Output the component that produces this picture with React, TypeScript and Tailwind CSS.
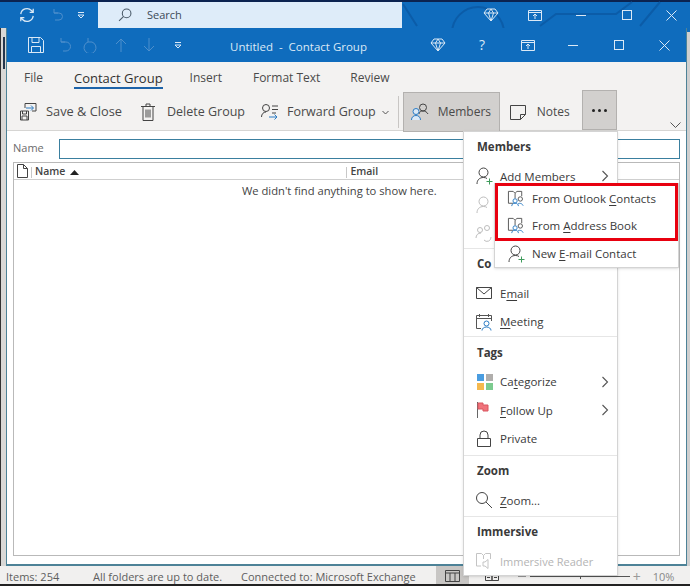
import type { ReactNode } from 'react';

function Stroke({ size = 20, children, className = '' }: { size?: number; children: ReactNode; className?: string }) {
  return (
    <svg width={size} height={size} viewBox="0 0 20 20" fill="none" stroke="currentColor" strokeWidth="1" className={className}>
      {children}
    </svg>
  );
}

function Person({ plus, color = '#444' }: { plus?: boolean; color?: string }) {
  return (
    <Stroke>
      <circle cx="9.500" cy="6.500" r="4.500" stroke={color} />
      <path d="M3 18c0-4 2.500-6.500 6.500-6.500 1.500 0 2.500.3 3.500 1" stroke={color} />
      {plus && <path d="M15.500 12.500v6M12.500 15.500h6" stroke="#3f9b5c" />}
    </Stroke>
  );
}

function BookPeople() {
  return (
    <Stroke size={19}>
      <path d="M1.500 15V2.500h5l2 2 2-2h5v5M1.500 15h5M8.500 4.500V10" stroke="#555" />
      <circle cx="14" cy="10.500" r="2.300" stroke="#555" />
      <circle cx="8.500" cy="12.500" r="2.200" stroke="#2b7cc4" />
      <path d="M5 18c0-2 1.500-3 3.500-3s3.500 1 3.500 3M11.500 15.500c1-.6 4-1 5.500 2" stroke="#2b7cc4" />
    </Stroke>
  );
}

function Chevron() {
  return (
    <svg width="8" height="12" viewBox="0 0 8 12" fill="none" stroke="#555" strokeWidth="1.100">
      <path d="M1.500 1l5 5-5 5" />
    </svg>
  );
}

function Diamond({ color = '#dbe9f6' }: { color?: string }) {
  return (
    <svg width="16" height="14" viewBox="0 0 16 14" fill="none" stroke={color} strokeWidth="1">
      <path d="M4 1h8l3 4-7 8-7-8zM1 5h14M5.500 5L8 13l2.500-8L8 1 5.500 5z" />
    </svg>
  );
}

function WindowControls({ help }: { help?: boolean }) {
  return (
    <div className="flex items-center text-[#dbe9f6]">
      <Diamond />
      {help && <span className="w-[72px] text-center text-[14px] leading-none">?</span>}
      <svg width="14" height="11" viewBox="0 0 14 11" fill="none" stroke="currentColor" className={help ? 'ml-[3px]' : 'ml-[29px]'}>
        <path d="M.5.500h13v10H.5zM.5 2.500h13M7 9V4.500M5 6l2-2 2 2" />
      </svg>
      <div className="ml-[33.5px] h-px w-[10px] bg-current" />
      <div className="ml-[36px] h-[10px] w-[10px] border border-current" />
      <svg width="11" height="11" viewBox="0 0 11 11" stroke="currentColor" className="ml-[34.5px]">
        <path d="M.500.500l10 10M10.500.500l-10 10" />
      </svg>
    </div>
  );
}

function U({ children }: { children: string }) {
  return <span className="underline underline-offset-2">{children}</span>;
}

function MenuRow({ icon, children, arrow, dim, className = '' }: { icon: ReactNode; children?: ReactNode; arrow?: boolean; dim?: boolean; className?: string }) {
  return (
    <div className={`flex h-[28.5px] items-center pl-[10px] pr-[8px] ${dim ? 'text-[#b4b4b4]' : 'text-[#3a3a3a]'} ${className}`}>
      <div className="flex w-[26px] shrink-0 items-center">{icon}</div>
      <div className="flex-1 whitespace-nowrap">{children}</div>
      {arrow && <Chevron />}
    </div>
  );
}

function MenuHeading({ children }: { children: string }) {
  return <div className="flex h-[31.5px] items-center border-t border-[#e6e6e6] pl-[13px] font-bold text-[#3a3a3a]">{children}</div>;
}

function RibbonButton({ icon, label, className = '' }: { icon: ReactNode; label: string; className?: string }) {
  return (
    <div className={`flex items-center gap-[7px] whitespace-nowrap ${className}`}>
      {icon}
      <span>{label}</span>
    </div>
  );
}

export default function App() {
  return (
    <div className="relative flex h-[586px] w-[690px] flex-col overflow-hidden bg-[#f1f0ef] font-['Open_Sans','Noto_Sans',sans-serif]">
      {/* Window behind */}
      <div className="flex h-[28px] shrink-0 items-center border-t-2 border-[#0b2350] bg-[#0f6cbd] text-[#dbe9f6]">
        <div className="flex w-[98px] items-center pl-[19px]">
          <svg width="16" height="16" viewBox="0 0 18 18" fill="none" stroke="currentColor" strokeWidth="1.400">
            <path d="M2 8a7 7 0 0 1 12-4l2 2M16 10a7 7 0 0 1-12 4l-2-2M16 2v4h-4M2 16v-4h4" />
          </svg>
          <svg width="14" height="14" viewBox="0 0 14 14" fill="none" stroke="#4e8fcc" className="ml-[14px]">
            <path d="M5 5h5a3 3 0 0 1 0 7H6M5 1v4h4" />
          </svg>
          <svg width="8" height="8" viewBox="0 0 8 8" fill="none" stroke="currentColor" className="ml-[14px]">
            <path d="M1 1.500h6M1 4l3 3 3-3z" />
          </svg>
        </div>
        <div className="flex h-full w-[304px] items-center bg-[#deecf9] pl-[20px] text-[11px] text-[#3c4a57]">
          <svg width="14" height="14" viewBox="0 0 13 13" fill="none" stroke="#4a5a68">
            <circle cx="8" cy="5" r="4" />
            <path d="M5 8l-4 4" />
          </svg>
          <span className="ml-[15px]">Search</span>
        </div>
        <div className="relative z-10 ml-[81px]">
          <WindowControls />
        </div>
      </div>

      <div className="flex min-h-0 flex-1">
        <div className="w-[6px] shrink-0 border-l border-[#333] bg-[#d9d8d6]">
          <div className="ml-[2px] mt-[9px] h-[32px] w-[2px] bg-[#24364d]" />
        </div>

        {/* Contact group window */}
        <div className="flex min-w-0 flex-1 flex-col border-x border-b-2 border-[#4d8297] bg-white">
          <div className="relative z-10 flex h-[34px] shrink-0 items-center bg-[#0f6cbd] text-[#dbe9f6]">
            <svg width="16" height="16" viewBox="0 0 16 16" fill="none" stroke="currentColor" className="ml-[21px]">
              <path d="M.5.500h12l3 3v12H.5zM4 .500v5h7v-5M3.500 15.500v-6h9v6" />
            </svg>
            <svg width="100" height="16" viewBox="0 0 100 16" fill="none" stroke="#4e8fcc" className="ml-[13px]">
              <path d="M4 5h5a4.500 4.500 0 0 1 0 9H6M4 1v4h4" />
              <path d="M31 5a6 6 0 1 0 4 0M31 1v4h4" />
              <path d="M64 15V2M59 7l5-5 5 5M92 1v13M87 9l5 5 5-5" />
            </svg>
            <svg width="8" height="8" viewBox="0 0 8 8" fill="none" stroke="currentColor" className="ml-[17px]">
              <path d="M1 1.500h6M1 4l3 3 3-3z" />
            </svg>
            <span className="ml-[48px] whitespace-pre pt-[3px] text-[11.5px]">Untitled  -  Contact Group</span>
            <div className="ml-[63px]">
              <WindowControls help />
            </div>
          </div>

          {/* Ribbon */}
          <div className="h-[69px] shrink-0 border-b border-[#d6d5d3] bg-[#f3f2f1] text-[12px] text-[#4a4a4a]">
            <div className="flex h-[31px] items-end pb-[6px] pl-[17px]">
              <span>File</span>
              <span className="relative ml-[31px] text-[13px] font-medium leading-[18px] text-[#323130]">
                Contact Group
                <span className="absolute inset-x-0 -bottom-[2px] h-[2px] bg-[#1d63a8]" />
              </span>
              <span className="ml-[27px]">Insert</span>
              <span className="ml-[31px]">Format Text</span>
              <span className="ml-[30px]">Review</span>
            </div>
            <div className="flex h-[38px] items-center pl-[12px]">
              <RibbonButton
                className="text-[12.8px]"
                label="Save & Close"
                icon={
                  <Stroke>
                    <path d="M1.500 9h8v9h-8zM3.500 9v3h4V9M3 18v-4h5v4" stroke="#444" />
                    <path d="M6 6V1.500h11V9h-4" stroke="#444" />
                    <path d="M7 6h7M12 3.500l2.500 2.500L12 8.500" stroke="#2b7cc4" />
                  </Stroke>
                }
              />
              <RibbonButton
                className="ml-[16px] text-[12.5px]"
                label="Delete Group"
                icon={
                  <Stroke className="mr-[2px]">
                    <path d="M3 4.500h14M5 4.500v14h10v-14M8 4.500V2h4v2.500M8 7.500v8M10 7.500v8M12 7.500v8" stroke="#444" />
                  </Stroke>
                }
              />
              <RibbonButton
                className="ml-[15px] text-[12.5px]"
                label="Forward Group"
                icon={
                  <Stroke>
                    <circle cx="6" cy="6" r="3.500" stroke="#444" />
                    <path d="M1.500 15c0-3 2-5 4.500-5M12 4h6M12 7.500h6M12 11h4" stroke="#444" />
                    <path d="M9 15h8M14.500 12.500L17 15l-2.500 2.500" stroke="#2b7cc4" />
                  </Stroke>
                }
              />
              <svg width="7" height="5" viewBox="0 0 7 5" fill="none" stroke="#555" className="ml-[6px]">
                <path d="M.5 1l3 3 3-3" />
              </svg>
              <div className="ml-[9px] h-[32px] w-px bg-[#c8c6c4]" />
              <div className="ml-[4px] flex h-[40px] w-[97px] shrink-0 items-center gap-[8px] border border-[#b3b1af] bg-[#d2d0ce] pl-[6px]">
                <Stroke>
                  <circle cx="13" cy="5.500" r="3.500" stroke="#444" />
                  <path d="M9 12c0-2 2-3 4-3s4 1 5 3" stroke="#444" />
                  <circle cx="6" cy="9.500" r="3" fill="#dbe9f6" stroke="#2b7cc4" />
                  <path d="M1.500 18c0-3 2-4.500 4.500-4.500s4.500 1.500 4.500 4.500" fill="#dbe9f6" stroke="#2b7cc4" />
                </Stroke>
                <span>Members</span>
              </div>
              <RibbonButton
                className="ml-[8px]"
                label="Notes"
                icon={
                  <Stroke className="mr-[2px]">
                    <path d="M2.500 3.500h15v9l-5 5h-10zM17.500 12.500h-5v5" stroke="#444" />
                  </Stroke>
                }
              />
              <div className="ml-[12px] flex h-[40px] w-[35px] shrink-0 -translate-y-[2px] items-center justify-center gap-[3px] border border-[#b3b1af] bg-[#d2d0ce]">
                <span className="h-[3px] w-[3px] rounded-full bg-[#222]" />
                <span className="h-[3px] w-[3px] rounded-full bg-[#222]" />
                <span className="h-[3px] w-[3px] rounded-full bg-[#222]" />
              </div>
              <svg width="11" height="6" viewBox="0 0 11 6" fill="none" stroke="#555" className="ml-[53px] mt-[26px]">
                <path d="M.5.500l5 5 5-5" />
              </svg>
            </div>
          </div>

          {/* Name field */}
          <div className="flex h-[31px] shrink-0 items-center pl-[6px] pr-[6px] pt-[4px] text-[11px] text-[#6b6b6b]">
            <span className="w-[46px]">Name</span>
            <div className="h-[20px] flex-1 border border-[#3a7f9f]" />
          </div>

          {/* List */}
          <div className="mx-[6px] mb-[8px] flex min-h-0 flex-1 flex-col border border-[#b9b9b9]">
            <div className="flex h-[17px] shrink-0 items-center border-b border-[#cfcfcf] pt-[2px] text-[10.5px] font-semibold text-[#444]">
              <svg width="11" height="14" viewBox="0 0 11 14" fill="none" stroke="#444" className="ml-[3px] -mt-[2px]">
                <path d="M.5.500h6l4 4v9H.5zM6.500.500v4h4" />
              </svg>
              <div className="ml-[3px] h-[11px] w-px bg-[#c8c8c8]" />
              <span className="ml-[3px]">Name</span>
              <svg width="9" height="5" viewBox="0 0 9 5" fill="#222" className="ml-[5px]">
                <path d="M4.500 0L9 5H0z" />
              </svg>
              <div className="ml-[267px] h-[11px] w-px bg-[#c8c8c8]" />
              <span className="ml-[3px]">Email</span>
            </div>
            <p className="mt-[3px] pl-[228px] text-[11.2px] font-medium text-[#444]">We didn't find anything to show here.</p>
          </div>
        </div>

        <div className="w-[3px] shrink-0 bg-[#cfcfcf]">
          <div className="h-[4px] bg-[#0f6cbd]" />
        </div>
      </div>

      {/* Status bar */}
      <div className="relative flex h-[20px] shrink-0 items-center border-b-2 border-[#222] pl-[6px] text-[11px] text-[#5e5e5e]">
        <span className="w-[87px] pt-[4px]">Items: 254</span>
        <span className="w-[148px] pt-[4px]">All folders are up to date.</span>
        <span className="pt-[4px]">Connected to: Microsoft Exchange</span>
        <div className="ml-[20px] flex h-full w-[33px] items-center justify-center bg-[#c8c6c4] pt-[2px]">
          <svg width="15" height="12" viewBox="0 0 15 12" fill="none" stroke="#444">
            <path d="M.5.500h14v11H.5zM.5 3h14M5 3v8.500M10 3v8.500" />
          </svg>
        </div>
        <svg width="14" height="9" viewBox="0 0 14 9" fill="none" stroke="#444" className="ml-[16px] mt-[3px]">
          <path d="M.5.500H7v8H.5zM7 .500h6.500v8H7zM2 3h3M2 5.500h3M9 3h3M9 5.500h3" />
        </svg>
        <div className="ml-[19px] mt-[3px] h-px w-[8px] bg-[#999]" />
        <div className="relative ml-[4px] mt-[3px] h-px w-[100px] bg-[#555]">
          <div className="absolute left-[50px] -top-[2px] h-[5px] w-px bg-[#555]" />
        </div>
        <span className="ml-[3px] pt-[3px] text-[14px] leading-none text-[#999]">+</span>
        <span className="ml-[12px] pt-[4px] text-[#888]">10%</span>
      </div>

      {/* Background pattern of the blue title bars */}
      <svg width="690" height="62" viewBox="0 0 690 62" fill="none" stroke="#0b5ca8" strokeWidth="2" className="pointer-events-none absolute left-0 top-0">
        <circle cx="478" cy="33" r="26" />
        <path d="M462 34h34l-24 28M403 4l14 22" />
        <path d="M540 26l16-12h60l16-12M640 26l20-24M575 62l24-22h80M650 62l26-30" />
        <path d="M206 44h30M236 44c4 0 4 16 10 18M330 62l14-18h28" />
        <circle cx="201" cy="43" r="4" />
        <circle cx="377" cy="42" r="4" />
      </svg>

      {/* Overflow menu */}
      <div className="absolute left-[463px] top-[131px] h-[445px] w-[155px] border border-[#d4d4d4] bg-white text-[11.5px] shadow-sm">
        <div className="flex h-[30px] items-center pl-[13px] font-bold text-[#3a3a3a]">Members</div>
        <MenuRow arrow icon={<Person plus />}>
          <U>A</U>dd Members
        </MenuRow>
        <MenuRow dim icon={<Person color="#bdbdbd" />} />
        <MenuRow
          dim
          icon={
            <Stroke>
              <circle cx="6" cy="7" r="2.500" stroke="#bdbdbd" />
              <circle cx="13" cy="5" r="2.500" stroke="#bdbdbd" />
              <path d="M2 15c0-3 2-5 5-5M10 17a4 4 0 0 0 7-3" stroke="#bdbdbd" />
            </Stroke>
          }
        />
        <MenuHeading>Co</MenuHeading>
        <MenuRow
          icon={
            <Stroke>
              <path d="M2.500 4.500h15v11h-15zM2.500 4.500L10 11l7.500-6.500" stroke="#444" />
            </Stroke>
          }
        >
          E<U>m</U>ail
        </MenuRow>
        <MenuRow
          icon={
            <Stroke>
              <path d="M7 16.500H2.500v-13h15V9M2.500 6.500h15M5.500 2v3M14.500 2v3" stroke="#555" />
              <circle cx="12.500" cy="11.500" r="2.500" stroke="#2b7cc4" />
              <path d="M8 18.500c0-2 2-3.500 4.500-3.500s4.500 1.500 4.500 3.500" stroke="#2b7cc4" />
            </Stroke>
          }
        >
          <U>M</U>eeting
        </MenuRow>
        <MenuHeading>Tags</MenuHeading>
        <MenuRow
          arrow
          icon={
            <span className="ml-[3px] grid grid-cols-2 gap-[2px]">
              <span className="h-[7px] w-[7px] bg-[#4a9de0]" />
              <span className="h-[7px] w-[7px] bg-[#b0aeac]" />
              <span className="h-[7px] w-[7px] bg-[#f5b94e]" />
              <span className="h-[7px] w-[7px] bg-[#7ccb8f]" />
            </span>
          }
        >
          Ca<U>t</U>egorize
        </MenuRow>
        <MenuRow
          arrow
          icon={
            <Stroke>
              <path d="M3.500 2v16" stroke="#666" />
              <path d="M4 3h5v2h5v6H9V9H4z" fill="#f0737b" stroke="#d95660" />
            </Stroke>
          }
        >
          <U>F</U>ollow Up
        </MenuRow>
        <MenuRow
          className="mb-[1.5px]"
          icon={
            <Stroke>
              <path d="M3.500 9.500h13v8h-13zM6 9.500V6a4 4 0 0 1 8 0v3.500" stroke="#444" />
            </Stroke>
          }
        >
          Private
        </MenuRow>
        <MenuHeading>Zoom</MenuHeading>
        <MenuRow
          className="mb-[1px]"
          icon={
            <Stroke>
              <circle cx="8" cy="8" r="5.500" stroke="#444" />
              <path d="M12 12l6 6" stroke="#444" />
            </Stroke>
          }
        >
          <U>Z</U>oom...
        </MenuRow>
        <MenuHeading>Immersive</MenuHeading>
        <MenuRow
          dim
          icon={
            <Stroke>
              <path d="M2.500 15V2.500h5l2 2 2-2h5V8M9.500 4.500V8M2.500 15H7" stroke="#c4c4c4" />
              <path d="M9 11h2l3-2.500v9L11 15H9z" stroke="#c4c4c4" />
            </Stroke>
          }
        >
          <span className="text-[11px]">Immersive Reader</span>
        </MenuRow>
      </div>

      {/* Add members flyout */}
      <div className="absolute left-[494px] top-[183px] w-[185px] border-x border-b border-[#d4d4d4] bg-white text-[11.5px] text-[#3a3a3a] shadow-sm">
        <div className="border-[3px] border-[#e8000f]">
          <div className="flex h-[26px] items-center pb-[1px] pl-[9px]">
            <BookPeople />
            <span className="ml-[6px] whitespace-nowrap">From Outlook <U>C</U>ontacts</span>
          </div>
          <div className="flex h-[26px] items-center pl-[9px] pt-[1px]">
            <BookPeople />
            <span className="ml-[6px] whitespace-nowrap">From <U>A</U>ddress Book</span>
          </div>
        </div>
        <div className="flex h-[26px] items-center pb-[1px] pl-[11px]">
          <Person plus />
          <span className="ml-[6px] whitespace-nowrap">New <U>E</U>-mail Contact</span>
        </div>
      </div>
    </div>
  );
}
